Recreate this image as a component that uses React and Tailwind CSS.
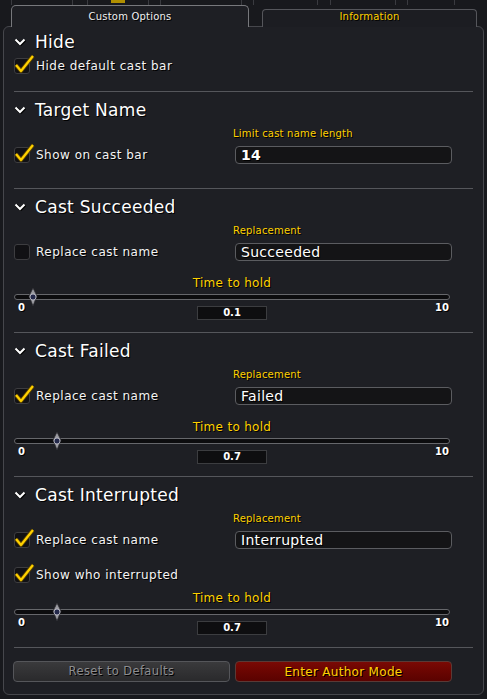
import React from "react";

const shadow = "[text-shadow:1px_1px_0_#000]";

const Chevron = () => (
    <svg width="12" height="8" viewBox="0 0 12 8" className="shrink-0">
        <path d="M1.5 1.5 L6 6 L10.5 1.5" fill="none" stroke="#000" strokeWidth="3" transform="translate(0.6 0.6)" />
        <path d="M1.5 1.5 L6 6 L10.5 1.5" fill="none" stroke="#fff" strokeWidth="2" />
    </svg>
);

const CheckBox = ({ checked }) => (
    <div className="relative w-4 h-4 shrink-0 rounded-[3px] border border-[#3d3d40] bg-[#111114]">
        {checked && (
            <svg width="22" height="20" viewBox="0 0 22 20" className="absolute -top-[5px] -left-[1px]">
                <path d="M2 11 L7 17 L19 2" fill="none" stroke="#5a4300" strokeWidth="4" strokeLinejoin="round" />
                <path d="M2 11 L7 17 L19 2" fill="none" stroke="#ffd100" strokeWidth="2.2" strokeLinejoin="round" />
            </svg>
        )}
    </div>
);

const Header = ({ title, className = "" }) => (
    <div className={`flex items-center h-[20px] ${className}`}>
        <Chevron />
        <span className={`ml-[9px] text-[17px] tracking-[0.3px] text-white leading-none ${shadow}`}>{title}</span>
    </div>
);

const CheckRow = ({ checked, label, className = "" }) => (
    <div className={`flex items-center h-[16px] ${className}`}>
        <CheckBox checked={checked} />
        <span className={`ml-[6px] text-[12px] tracking-[0.5px] text-[#f4f4f4] leading-none ${shadow}`}>{label}</span>
    </div>
);

const Divider = ({ className = "" }) => <div className={`h-px bg-[#55565b] ${className}`} />;

const FieldRow = ({ checked, label, field, value, bold }) => (
    <div className="grid grid-cols-[219px_1fr]">
        <div />
        <div className={`mt-[8px] h-[12px] text-[10px] tracking-[0.2px] leading-[12px] text-[#ffd100] ${shadow}`}>{field}</div>
        <div className="mt-[6px] h-[18px] flex items-center">
            <CheckBox checked={checked} />
            <span className={`ml-[6px] text-[12px] tracking-[0.5px] text-[#f4f4f4] leading-none ${shadow}`}>{label}</span>
        </div>
        <div className="mt-[6px] ml-[2px] w-[217px] h-[18px] rounded-[4px] border border-[#5b5c60] bg-[#141416] flex items-center px-[5px]">
            <span className={`text-[14px] tracking-[0.3px] leading-none text-white ${bold ? "font-bold" : ""} ${shadow}`}>{value}</span>
        </div>
    </div>
);

const Thumb = ({ left }) => (
    <svg width="10" height="18" viewBox="0 0 10 18" className="absolute -top-[3px]" style={{ left }}>
        <path d="M5 0 L9 8 L5 18 L1 8 Z" fill="#9a9aa0" stroke="#2a2a2e" strokeWidth="0.8" />
        <circle cx="5" cy="9" r="3" fill="#23284a" stroke="#c8c8d0" strokeWidth="0.8" />
    </svg>
);

const Slider = ({ thumb, value, className = "" }) => (
    <div className={`w-[436px] ${className}`}>
        <div className={`h-[14px] text-center text-[12px] tracking-[0.3px] leading-[14px] text-[#ffd100] ${shadow}`}>Time to hold</div>
        <div className="relative mt-[1px] h-[12px]">
            <div className="absolute left-0 right-0 top-[3px] h-[6px] rounded-full border border-[#66676b] bg-[#0c0c0e]" />
            <Thumb left={thumb} />
        </div>
        <div className="mt-[3px] h-[14px] grid grid-cols-[1fr_70px_1fr] items-start">
            <span className={`-mt-[3px] pl-[4px] text-[10px] font-bold leading-none text-white ${shadow}`}>0</span>
            <div className="h-[14px] border border-[#3c3d40] bg-[#0e0e10] flex items-center justify-center">
                <span className="text-[10px] font-bold leading-none text-white">{value}</span>
            </div>
            <span className={`-mt-[3px] pr-[1px] text-right text-[10px] font-bold leading-none text-white ${shadow}`}>10</span>
        </div>
    </div>
);

const App = () => {
    return (
        <div className="w-[487px] h-[699px] bg-[#18191d] flex flex-col overflow-hidden font-['DejaVu_Sans',sans-serif]">
            <div className="h-[5px] flex pl-[11px]">
                <div className="w-[62px] border-x border-[#3a3b40]" />
                <div className="w-[14px]" />
                <div className="w-[62px] border-x border-[#3a3b40] flex justify-center"><div className="w-[14px] h-[3px] bg-[#b08f00]" /></div>
                <div className="w-[11px]" />
                <div className="w-[82px] border-x border-[#3a3b40]" />
                <div className="w-[11px]" />
                <div className="w-[65px] border-x border-[#3a3b40]" />
                <div className="w-[12px]" />
                <div className="w-[66px] border-x border-[#3a3b40]" />
                <div className="w-[11px]" />
                <div className="w-[48px] border-x border-[#3a3b40]" />
            </div>
            <div className="relative z-10 h-[22px] -mb-[1px] flex items-end pl-[11px]">
                <div className="w-[238px] h-[22px] rounded-t-[5px] border border-b-0 border-[#77787c] bg-[#1e1f24] flex items-center justify-center">
                    <span className={`text-[10px] tracking-[0.2px] text-[#f0f0f0] ${shadow}`}>Custom Options</span>
                </div>
                <div className="ml-[13px] w-[215px] h-[18px] rounded-t-[4px] border border-b-0 border-[#55565b] bg-[#1c1d22] flex items-start justify-center pt-[1px]">
                    <span className={`text-[10px] tracking-[0.2px] leading-[12px] text-[#ffd100] ${shadow}`}>Information</span>
                </div>
            </div>
            <div className="flex-1 mx-[3px] mb-[4px] rounded-[6px] border border-[#46474c] bg-[#1e1f24] px-[10px] pt-[5px] flex flex-col">
                <Header title="Hide" />
                <CheckRow checked label="Hide default cast bar" className="mt-[6px]" />
                <Divider className="mt-[17px]" />

                <Header title="Target Name" className="mt-[8px]" />
                <FieldRow checked label="Show on cast bar" field="Limit cast name length" value="14" bold />
                <Divider className="mt-[24px]" />

                <Header title="Cast Succeeded" className="mt-[8px]" />
                <FieldRow label="Replace cast name" field="Replacement" value="Succeeded" />
                <Slider thumb={14} value="0.1" className="mt-[15px]" />
                <Divider className="mt-[12px]" />

                <Header title="Cast Failed" className="mt-[8px]" />
                <FieldRow checked label="Replace cast name" field="Replacement" value="Failed" />
                <Slider thumb={38} value="0.7" className="mt-[15px]" />
                <Divider className="mt-[12px]" />

                <Header title="Cast Interrupted" className="mt-[8px]" />
                <FieldRow checked label="Replace cast name" field="Replacement" value="Interrupted" />
                <CheckRow checked label="Show who interrupted" className="mt-[18px]" />
                <Slider thumb={38} value="0.7" className="mt-[8px]" />
                <Divider className="mt-[12px]" />

                <div className="mt-[13px] -ml-[1px] flex gap-[5px]">
                    <button className="w-[217px] h-[21px] rounded-[4px] border border-[#55565a] bg-gradient-to-b from-[#3a3a3c] to-[#2a2a2c] flex items-center justify-center">
                        <span className={`text-[11.5px] tracking-[0.4px] text-[#8d8d90] ${shadow}`}>Reset to Defaults</span>
                    </button>
                    <button className="w-[217px] h-[21px] rounded-[4px] border border-[#5a3a36] bg-gradient-to-b from-[#7a0a04] to-[#5a0200] flex items-center justify-center">
                        <span className={`text-[12px] tracking-[0.3px] text-[#ffd100] ${shadow}`}>Enter Author Mode</span>
                    </button>
                </div>
            </div>
        </div>
    );
};

export default App;
